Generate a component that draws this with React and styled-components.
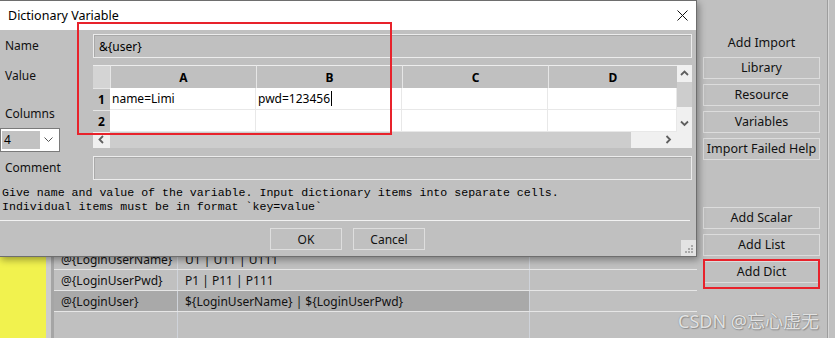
import React from 'react';
import styled, { createGlobalStyle } from 'styled-components';

const UI = '"Noto Sans", "Liberation Sans", sans-serif';
const MONO = '"Liberation Mono", "DejaVu Sans Mono", monospace';

const GlobalStyle = createGlobalStyle`
  html, body { margin: 0; padding: 0; background: #c0c0c0; }
  body { font-family: ${UI}; font-size: 12px; color: #000; }
  * { box-sizing: border-box; }
`;

const Page = styled.div`
  position: relative;
  width: 835px;
  height: 338px;
  overflow: hidden;
  display: flex;
  background: #c0c0c0;
`;

/* ---------- background window ---------- */

const MainArea = styled.div`
  width: 697px;
  display: flex;
`;

const YellowStrip = styled.div`
  width: 46px;
  background: #f1f24e;
`;

const Splitter = styled.div`
  width: 8px;
  background: #cdcdcd;
  border-right: 3px solid #a5a5a5;
`;

const Table = styled.div`
  flex: 1;
  display: flex;
  flex-direction: column;
  justify-content: flex-end;
`;

const TableRow = styled.div`
  display: grid;
  grid-template-columns: 123px 352px 1fr;
  height: ${p => p.$h || 21}px;
  border-bottom: ${p => (p.$filler ? 'none' : '1px solid #e6e6e6')};
`;

const TableCell = styled.div`
  display: flex;
  align-items: center;
  padding-left: 7px;
  white-space: nowrap;
  font-size: 12px;
  color: #111;
  background: ${p => (p.$sel ? '#a9a9a9' : 'transparent')};
  & + & { border-left: 1px solid #cfd3da; }
`;

const RightPanel = styled.div`
  flex: 1;
  display: flex;
`;

const Controls = styled.div`
  width: 130px;
  padding: 35px 0 0 6px;
  display: flex;
  flex-direction: column;
`;

const GroupLabel = styled.div`
  width: 117px;
  text-align: center;
  line-height: 16px;
  font-size: 12.5px;
  margin-bottom: 6px;
  color: #111;
`;

const ButtonGroup = styled.div`
  display: flex;
  flex-direction: column;
  gap: 5px;
  margin-top: ${p => p.$top || 0}px;
`;

const SideButton = styled.button`
  position: relative;
  width: 117px;
  height: 22px;
  padding: 0;
  background: #c0c0c0;
  border: 1px solid #dcdcdc;
  font-family: ${UI};
  font-size: 12.5px;
  color: #111;
  line-height: 18px;
`;

const PanelRule = styled.div`
  width: 2px;
  background: #9d9d9d;
  border-right: 1px solid #d6d6d6;
`;

const Annotation = styled.div`
  position: absolute;
  border: 2px solid #e8222b;
  pointer-events: none;
  left: ${p => p.$x}px;
  top: ${p => p.$y}px;
  width: ${p => p.$w}px;
  height: ${p => p.$h}px;
`;

const Watermark = styled.div`
  position: absolute;
  right: 16px;
  bottom: 6px;
  font-family: "Noto Sans", "Noto Sans CJK SC", sans-serif;
  font-size: 18px;
  line-height: 22px;
  color: rgba(255, 255, 255, 0.8);
  text-shadow: 0 0 1px rgba(90, 90, 90, 0.7), 1px 1px 1px rgba(80, 80, 80, 0.4);
`;

/* ---------- dialog ---------- */

const Dialog = styled.div`
  position: absolute;
  left: -1px;
  top: 0;
  width: 698px;
  height: 257px;
  background: #c0c0c0;
  border: 1px solid #6e6e6e;
  box-shadow: 2px 3px 7px rgba(0, 0, 0, 0.35);
  display: flex;
  flex-direction: column;
`;

const TitleBar = styled.div`
  height: 29px;
  background: #fff;
  display: flex;
  align-items: center;
  justify-content: space-between;
  padding: 0 8px 0 8px;
  font-size: 12.5px;
`;

const Body = styled.div`
  position: relative;
  flex: 1;
  padding: 4px 4px 0 0;
  display: flex;
  flex-direction: column;
`;

const FormRow = styled.div`
  display: grid;
  grid-template-columns: 93px 1fr;
  align-items: ${p => (p.$top ? 'start' : 'center')};
  margin-top: ${p => p.$mt || 0}px;
`;

const Label = styled.div`
  padding-left: 5px;
  line-height: 22px;
  font-size: 12px;
  color: #111;
  margin-top: ${p => p.$mt || 0}px;
`;

const TextBox = styled.div`
  height: 24px;
  background: #c0c0c0;
  border: 1px solid #ececec;
  box-shadow: inset 1px 1px 0 #a9a9a9;
  padding-left: 5px;
  display: flex;
  align-items: center;
  font-size: 12px;
`;

const LeftStack = styled.div`
  display: flex;
  flex-direction: column;
`;

const Combo = styled.div`
  margin-top: 3px;
  width: 60px;
  height: 24px;
  background: #fff;
  border: 1px solid #7a7a7a;
  padding: 2px 6px 2px 1px;
  display: flex;
  align-items: center;
  justify-content: space-between;
`;

const ComboValue = styled.div`
  width: 38px;
  height: 18px;
  background: #c2c2c2;
  padding-left: 2px;
  line-height: 18px;
  font-size: 12px;
`;

const DataGrid = styled.div`
  height: 83px;
  display: grid;
  grid-template-columns: 17px 146px 146px 146px 1fr 15px;
  grid-template-rows: 23px 22px 22px 1fr;
  background: #fff;
`;

const Corner = styled.div`
  background: #d4d4d4;
  border-top: 1px solid #ededed;
`;

const ColHeader = styled.div`
  background: #c0c0c0;
  border-top: 1px solid #ededed;
  border-left: 1px solid #e6e6e6;
  display: flex;
  align-items: center;
  justify-content: center;
  font-weight: 700;
  font-size: 12px;
`;

const RowHeader = styled.div`
  background: #c0c0c0;
  border-top: 1px solid #e6e6e6;
  display: flex;
  align-items: center;
  justify-content: center;
  font-weight: 700;
  font-size: 12px;
`;

const DataCell = styled.div`
  background: #fff;
  border-right: 1px solid #e8e8e8;
  border-bottom: 1px solid #e8e8e8;
  padding-left: 2px;
  display: flex;
  align-items: center;
  font-size: 12px;
  white-space: nowrap;
`;

const Caret = styled.span`
  display: inline-block;
  width: 1px;
  height: 15px;
  background: #000;
  margin-left: 1px;
`;

const VScroll = styled.div`
  grid-column: 6;
  grid-row: 1 / 4;
  background: #f0f0f0;
  display: flex;
  flex-direction: column;
  align-items: center;
`;

const ArrowBox = styled.div`
  width: ${p => p.$w || 15}px;
  height: ${p => p.$h || 17}px;
  display: flex;
  align-items: center;
  justify-content: center;
  background: #f0f0f0;
  flex-shrink: 0;
  margin-top: ${p => (p.$push ? 'auto' : '0')};
`;

const HArrowBox = styled(ArrowBox)`
  margin-top: 0;
  margin-left: ${p => (p.$push ? 'auto' : '0')};
`;

const VThumb = styled.div`
  width: 15px;
  height: 25px;
  background: #cdcdcd;
`;

const HScroll = styled.div`
  grid-column: 1 / 6;
  grid-row: 4;
  display: flex;
  background: #f0f0f0;
`;

const HThumb = styled.div`
  width: 521px;
  background: #cdcdcd;
`;

const ScrollCorner = styled.div`
  grid-column: 6;
  grid-row: 4;
  background: #f0f0f0;
`;

const HelpText = styled.div`
  margin-top: 6px;
  padding-left: 2px;
  font-family: ${MONO};
  font-size: 11.6px;
  line-height: 14px;
  white-space: pre;
  color: #000;
`;

const Separator = styled.div`
  margin: 6px 2px 0 0;
  height: 1px;
  background: #f2f2f2;
`;

const ButtonRow = styled.div`
  margin-top: 7px;
  padding-left: 3px;
  display: flex;
  justify-content: center;
  gap: 11px;
`;

const DialogButton = styled.button`
  width: 72px;
  height: 22px;
  padding: 0;
  background: #c0c0c0;
  border: 1px solid #dedede;
  font-family: ${UI};
  font-size: 12px;
  color: #111;
`;

const Grip = styled.div`
  position: absolute;
  right: 0;
  bottom: 0;
  width: 15px;
  height: 16px;
  background: #e3e3e3;
  display: flex;
  align-items: flex-end;
  justify-content: flex-end;
  padding: 0 2px 2px 0;
`;

const Chevron = ({ dir, color = '#5f5f5f' }) => {
  const pts = {
    up: '1,5 4.5,1.5 8,5',
    down: '1,1.5 4.5,5 8,1.5',
    left: '5,1 1.5,4.5 5,8',
    right: '1.5,1 5,4.5 1.5,8',
  }[dir];
  const vertical = dir === 'up' || dir === 'down';
  return (
    <svg width={vertical ? 9 : 7} height={vertical ? 7 : 9} viewBox={vertical ? '0 0 9 7' : '0 0 7 9'}>
      <polyline points={pts} fill="none" stroke={color} strokeWidth="1.8" />
    </svg>
  );
};

const CloseIcon = () => (
  <svg width="11" height="11" viewBox="0 0 11 11">
    <path d="M0.5 0.5 L10.5 10.5 M10.5 0.5 L0.5 10.5" stroke="#111" strokeWidth="1" />
  </svg>
);

const GripDots = () => (
  <svg width="10" height="10" viewBox="0 0 10 10">
    {[[8, 2], [5, 5], [8, 5], [2, 8], [5, 8], [8, 8]].map(([x, y]) => (
      <rect key={`${x}-${y}`} x={x - 1} y={y - 1} width="2" height="2" fill="#a9a9a9" />
    ))}
  </svg>
);

const variables = [
  { name: '@{LoginUserName}', value: 'U1 | U11 | U111' },
  { name: '@{LoginUserPwd}', value: 'P1 | P11 | P111' },
  { name: '@{LoginUser}', value: '${LoginUserName} | ${LoginUserPwd}', sel: true },
];

export default function App() {
  return (
    <Page>
      <GlobalStyle />

      <MainArea>
        <YellowStrip />
        <Splitter />
        <Table>
          {variables.map(v => (
            <TableRow key={v.name}>
              <TableCell $sel={v.sel}>{v.name}</TableCell>
              <TableCell $sel={v.sel}>{v.value}</TableCell>
              <TableCell />
            </TableRow>
          ))}
          <TableRow $h={26} $filler>
            <TableCell />
            <TableCell />
            <TableCell />
          </TableRow>
        </Table>
      </MainArea>

      <RightPanel>
        <Controls>
          <GroupLabel>Add Import</GroupLabel>
          <ButtonGroup>
            <SideButton>Library</SideButton>
            <SideButton>Resource</SideButton>
            <SideButton>Variables</SideButton>
            <SideButton>Import Failed Help</SideButton>
          </ButtonGroup>
          <ButtonGroup $top={47}>
            <SideButton>Add Scalar</SideButton>
            <SideButton>Add List</SideButton>
            <SideButton>
              Add Dict
              <Annotation $x={-1} $y={-3} $w={117} $h={30} />
            </SideButton>
          </ButtonGroup>
        </Controls>
        <PanelRule />
      </RightPanel>

      <Dialog>
        <TitleBar>
          <span>Dictionary Variable</span>
          <CloseIcon />
        </TitleBar>
        <Body>
          <FormRow>
            <Label>Name</Label>
            <TextBox>&amp;{'{user}'}</TextBox>
          </FormRow>

          <FormRow $top $mt={7}>
            <LeftStack>
              <Label>Value</Label>
              <Label $mt={16}>Columns</Label>
              <Combo>
                <ComboValue>4</ComboValue>
                <svg width="9" height="6" viewBox="0 0 9 6">
                  <polyline points="0.5,0.5 4.5,4.5 8.5,0.5" fill="none" stroke="#555" strokeWidth="1" />
                </svg>
              </Combo>
            </LeftStack>
            <DataGrid>
              <Corner />
              <ColHeader>A</ColHeader>
              <ColHeader>B</ColHeader>
              <ColHeader>C</ColHeader>
              <ColHeader>D</ColHeader>
              <VScroll>
                <ArrowBox><Chevron dir="up" /></ArrowBox>
                <VThumb />
                <ArrowBox $push><Chevron dir="down" /></ArrowBox>
              </VScroll>

              <RowHeader>1</RowHeader>
              <DataCell>name=Limi</DataCell>
              <DataCell>pwd=123456<Caret /></DataCell>
              <DataCell />
              <DataCell />

              <RowHeader>2</RowHeader>
              <DataCell />
              <DataCell />
              <DataCell />
              <DataCell />

              <HScroll>
                <HArrowBox $w={17} $h={15}><Chevron dir="left" /></HArrowBox>
                <HThumb />
                <HArrowBox $w={17} $h={15} $push><Chevron dir="right" /></HArrowBox>
              </HScroll>
              <ScrollCorner />
            </DataGrid>
          </FormRow>

          <FormRow $mt={4}>
            <Label>Comment</Label>
            <TextBox />
          </FormRow>

          <HelpText>
            {'Give name and value of the variable. Input dictionary items into separate cells.\nIndividual items must be in format `key=value`'}
          </HelpText>
          <Separator />
          <ButtonRow>
            <DialogButton>OK</DialogButton>
            <DialogButton>Cancel</DialogButton>
          </ButtonRow>
          <Grip><GripDots /></Grip>
        </Body>
        <Annotation $x={77} $y={21} $w={315} $h={113} />
      </Dialog>

      <Watermark>CSDN @忘心虚无</Watermark>
    </Page>
  );
}
